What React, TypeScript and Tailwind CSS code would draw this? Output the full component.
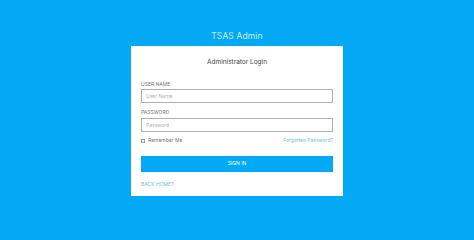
import React from 'react';

const App: React.FC = () => {
  return (
    <div
      className="w-full min-h-screen h-[214px] bg-[#03a9f4] flex flex-col items-center overflow-hidden"
      style={{ fontFamily: 'Inter, "Open Sans", sans-serif' }}
    >
      <h1 className="mt-[30px] h-[12px] leading-[12px] text-[8.5px] font-light text-white tracking-[0.2px]">TSAS Admin</h1>

      <div className="mt-[4px] w-[212px] h-[150px] bg-white px-[10px]">
        <p className="mt-[12px] h-[8px] leading-[8px] text-center text-[6.5px] text-[#444]">Administrator Login</p>

        <form className="flex flex-col">
          <label className="mt-[15px] h-[6px] leading-[6px] text-[5px] text-[#777] uppercase">User Name</label>
          <input
            type="text"
            placeholder="User Name"
            className="mt-[2px] w-full h-[14px] border border-[#b0b0b0] px-[4px] text-[5px] text-[#333] placeholder:text-[#b0b0b0] focus:outline-none"
          />

          <label className="mt-[6px] h-[6px] leading-[6px] text-[5px] text-[#777] uppercase">Password</label>
          <input
            type="password"
            placeholder="Password"
            className="mt-[3px] w-full h-[14px] border border-[#b0b0b0] px-[4px] text-[5px] text-[#333] placeholder:text-[#b0b0b0] focus:outline-none"
          />

          <div className="mt-[5px] h-[8px] flex items-center justify-between">
            <label className="flex items-center gap-[3px] text-[5px] text-[#777]">
              <span className="w-[4px] h-[4px] border-[0.5px] border-[#999] inline-block"></span>
              Remember Me
            </label>
            <a className="text-[5px] text-[#6cbfe8]">Forgotten Password?</a>
          </div>

          <button
            type="button"
            className="mt-[11px] w-full h-[16px] bg-[#03a9f4] text-white text-[5px] uppercase"
          >
            Sign In
          </button>

          <a className="mt-[9px] h-[6px] leading-[6px] text-[5px] text-[#6cbfe8] uppercase">Back Home?</a>
        </form>
      </div>
    </div>
  );
};

export default App;
